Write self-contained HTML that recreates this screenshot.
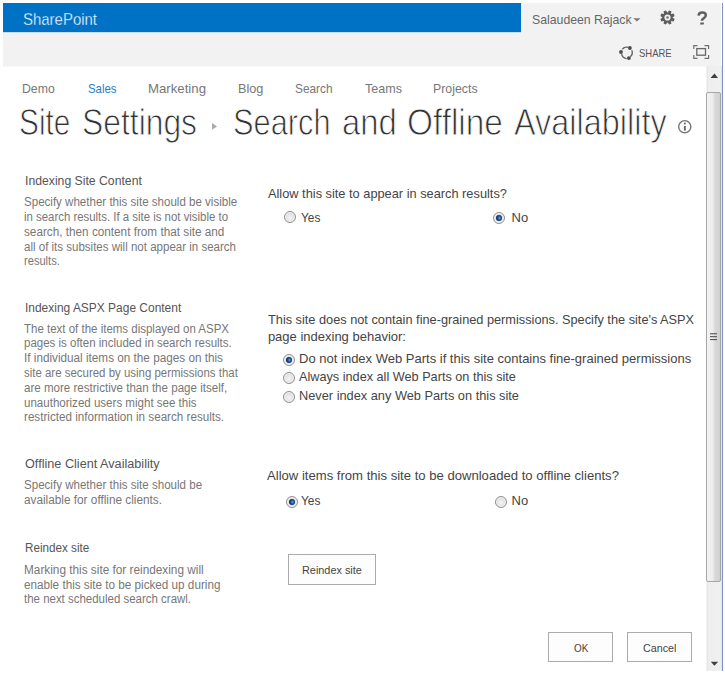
<!DOCTYPE html>
<html><head><meta charset="utf-8"><style>
html,body{margin:0;padding:0;}
body{width:725px;height:675px;overflow:hidden;background:#fff;position:relative;font-family:"Liberation Sans",sans-serif;}
.t{position:absolute;white-space:pre;line-height:1;transform-origin:0 0;font-family:"Liberation Sans",sans-serif;}
.abs{position:absolute;}
.radio{position:absolute;width:10px;height:10px;border-radius:50%;border:1px solid #8f8f8f;background:radial-gradient(circle at 50% 55%,#f4f4f4 0,#dcdcdc 70%,#e8e8e8 100%);box-shadow:inset 0 0 0 1px #f6f6f6;}
.radio.on::after{content:"";position:absolute;left:2px;top:2px;width:6px;height:6px;border-radius:50%;background:radial-gradient(circle 3.6px at 3.4px 3px,#6cc0f2 0,#2a78c0 1px,#163c78 2.2px,#0c1f4c 3.6px);}
.btn{position:absolute;box-sizing:border-box;border:1px solid #ababab;background:#fdfdfd;}
</style></head><body>
<div class="abs" style="left:3px;top:3px;width:518px;height:29px;background:#0072c6"></div>
<div class="abs" style="left:521px;top:3px;width:200px;height:29px;background:#f2f2f2"></div>
<div class="abs" style="left:3px;top:32px;width:718px;height:34px;background:#f2f2f2"></div>
<div class="abs" style="left:3px;top:32px;width:518px;height:1px;background:#c9dcec"></div>
<div class="abs" style="left:722px;top:3px;width:1px;height:668px;background:#8094bb"></div>
<!-- scrollbar -->
<div class="abs" style="left:706px;top:66px;width:15px;height:605px;background:linear-gradient(to right,#f2f2f2 0,#f2f2f2 1px,#e6e6e6 1px,#e6e6e6 2px,#eeeeee 2px,#f0f0f0 100%)"></div>
<div class="abs" style="left:3px;top:66px;width:703px;height:1px;background:#f9f9f9"></div>
<div class="abs" style="left:721px;top:66px;width:1px;height:605px;background:#e6e6e6"></div>
<svg class="abs" style="left:706px;top:66px" width="15" height="605" viewBox="0 0 15 605">
 <polygon points="4.5,12 8.5,7.5 12,12" fill="#404040"/>
 <polygon points="4.8,595.8 12.2,595.8 8.4,599.8" fill="#404040"/>
</svg>
<div class="abs" style="left:706px;top:92px;width:15px;height:490px;box-sizing:border-box;border:1px solid #a6a6a6;border-radius:2px;background:linear-gradient(to right,#f3f3f3 0,#ececec 45%,#d9d9d9 60%,#d0d0d0 100%)"></div>
<svg class="abs" style="left:706px;top:330px" width="15" height="12" viewBox="0 0 15 12">
 <rect x="4" y="3.2" width="7" height="1.1" fill="#555"/>
 <rect x="4" y="6.1" width="7" height="1.1" fill="#555"/>
 <rect x="4" y="9.0" width="7" height="1.1" fill="#555"/>
</svg>
<!-- suite icons -->
<svg class="abs" style="left:630px;top:15px" width="14" height="10" viewBox="0 0 14 10"><polygon points="3.3,3.2 10.5,3.2 6.9,6.5" fill="#777"/></svg>
<svg class="abs" style="left:660px;top:10.3px" width="15" height="15" viewBox="0 0 15 15"><path d="M7.50,2.50 L7.61,2.50 L9.10,0.38 L11.40,1.33 L10.95,3.89 L11.04,3.96 L11.11,4.05 L13.67,3.60 L14.62,5.90 L12.50,7.39 L12.50,7.50 L12.50,7.61 L14.62,9.10 L13.67,11.40 L11.11,10.95 L11.04,11.04 L10.95,11.11 L11.40,13.67 L9.10,14.62 L7.61,12.50 L7.50,12.50 L7.39,12.50 L5.90,14.62 L3.60,13.67 L4.05,11.11 L3.96,11.04 L3.89,10.95 L1.33,11.40 L0.38,9.10 L2.50,7.61 L2.50,7.50 L2.50,7.39 L0.38,5.90 L1.33,3.60 L3.89,4.05 L3.96,3.96 L4.05,3.89 L3.60,1.33 L5.90,0.38 L7.39,2.50Z" fill="#5f5f5f"/><circle cx="7.5" cy="7.5" r="3.1" fill="#f2f2f2"/><circle cx="7.5" cy="7.5" r="1.3" fill="#777"/></svg>
<svg class="abs" style="left:692px;top:8px" width="20" height="20" viewBox="0 0 20 20"><path d="M6.6,7.6 C6.8,5.4 8.3,4.6 10.2,4.6 C12.3,4.6 13.8,5.6 13.8,7.3 C13.8,9 12.6,9.7 11.4,10.6 C10.4,11.3 9.9,11.9 9.9,12.8" fill="none" stroke="#5f5f5f" stroke-width="2.5"/><path d="M8.4,14.5 H12 L11.7,16.6 H8.1 Z" fill="#5f5f5f"/></svg>
<svg class="abs" style="left:614px;top:42px" width="24" height="22" viewBox="0 0 24 22">
 <g fill="none" stroke="#666" stroke-width="1.4">
  <path d="M8.3,7.3 A5.6,5.6 0 0 1 14.2,5.4"/>
  <path d="M17.8,8.2 A5.6,5.6 0 0 1 16.3,14.6"/>
  <path d="M12.7,16.6 A5.6,5.6 0 0 1 7.6,12.2"/>
 </g>
 <circle cx="15.9" cy="6" r="1.9" fill="#4a4a4a"/>
 <circle cx="7" cy="10" r="1.9" fill="#4a4a4a"/>
 <circle cx="14.9" cy="16.1" r="1.9" fill="#4a4a4a"/>
</svg>
<svg class="abs" style="left:688px;top:40px" width="26" height="24" viewBox="0 0 26 24">
 <g fill="none" stroke="#707070" stroke-width="1.2">
  <path d="M5.8,9 V5.6 H9.5"/>
  <path d="M16.5,5.6 H20.6 V9"/>
  <path d="M5.8,15 V18.4 H9.5"/>
  <path d="M16.5,18.4 H20.6 V15"/>
 </g>
 <rect x="8.8" y="8.6" width="8.7" height="6.6" fill="none" stroke="#666" stroke-width="1.3"/>
</svg>
<!-- title arrow and info -->
<svg class="abs" style="left:205px;top:115px" width="20" height="20" viewBox="0 0 20 20"><polygon points="7,8 12,11.4 7,14.8" fill="#ababab"/></svg>
<svg class="abs" style="left:672px;top:115px" width="25" height="25" viewBox="0 0 25 25">
 <circle cx="12.75" cy="11.7" r="6.1" fill="none" stroke="#777" stroke-width="1.4"/>
 <rect x="11.9" y="10.9" width="1.9" height="4.7" fill="#666"/>
 <circle cx="12.8" cy="8.4" r="1" fill="#666"/>
</svg>
<!-- radios -->
<div class="radio" style="left:284px;top:211px"></div>
<div class="radio on" style="left:493px;top:212px"></div>
<div class="radio on" style="left:283px;top:353.5px"></div>
<div class="radio" style="left:283px;top:372px"></div>
<div class="radio" style="left:283px;top:391px"></div>
<div class="radio on" style="left:286px;top:496px"></div>
<div class="radio" style="left:495px;top:496px"></div>
<!-- buttons -->
<div class="btn" style="left:288px;top:554px;width:88px;height:31px"></div>
<div class="btn" style="left:548px;top:632px;width:65px;height:30px"></div>
<div class="btn" style="left:627px;top:632px;width:65px;height:30px"></div>
<span class="t" style="left:23.30px;top:11.70px;font-size:16.8px;color:#fff;transform:scaleX(0.8916);-webkit-text-stroke:0.35px #0072c6;">SharePoint</span>
<span class="t" style="left:531.50px;top:13.80px;font-size:12.2px;color:#666;transform:scaleX(1.0071);">Salaudeen Rajack</span>
<span class="t" style="left:638.80px;top:48.40px;font-size:11px;color:#555;transform:scaleX(0.8605);">SHARE</span>
<span class="t" style="left:22.00px;top:81.60px;font-size:13px;color:#777;transform:scaleX(0.9429);">Demo</span>
<span class="t" style="left:87.80px;top:81.60px;font-size:13px;color:#1a7fd0;transform:scaleX(0.8758);">Sales</span>
<span class="t" style="left:148.30px;top:81.60px;font-size:13px;color:#777;transform:scaleX(1.0158);">Marketing</span>
<span class="t" style="left:238.00px;top:81.60px;font-size:13px;color:#777;transform:scaleX(0.9731);">Blog</span>
<span class="t" style="left:295.00px;top:81.60px;font-size:13px;color:#777;transform:scaleX(0.9098);">Search</span>
<span class="t" style="left:364.80px;top:81.60px;font-size:13px;color:#777;transform:scaleX(0.9658);">Teams</span>
<span class="t" style="left:433.00px;top:81.60px;font-size:13px;color:#777;transform:scaleX(0.9489);">Projects</span>
<span class="t" style="left:18.78px;top:105.00px;font-size:36.5px;color:#333;transform:scaleX(0.8164);-webkit-text-stroke:0.9px #fff;">Site</span>
<span class="t" style="left:81.73px;top:105.00px;font-size:36.5px;color:#333;transform:scaleX(0.8723);-webkit-text-stroke:0.9px #fff;">Settings</span>
<span class="t" style="left:232.76px;top:105.00px;font-size:36.5px;color:#333;transform:scaleX(0.8442);-webkit-text-stroke:0.9px #fff;">Search</span>
<span class="t" style="left:341.70px;top:105.00px;font-size:36.5px;color:#333;transform:scaleX(0.9000);-webkit-text-stroke:0.9px #fff;">and</span>
<span class="t" style="left:407.49px;top:105.00px;font-size:36.5px;color:#333;transform:scaleX(0.9146);-webkit-text-stroke:0.9px #fff;">Offline</span>
<span class="t" style="left:513.60px;top:105.00px;font-size:36.5px;color:#333;transform:scaleX(0.8884);-webkit-text-stroke:0.9px #fff;">Availability</span>
<span class="t" style="left:25.30px;top:174.80px;font-size:12.5px;color:#555;transform:scaleX(0.9775);">Indexing Site Content</span>
<span class="t" style="left:25.00px;top:301.60px;font-size:12.5px;color:#555;transform:scaleX(0.9567);">Indexing ASPX Page Content</span>
<span class="t" style="left:24.90px;top:457.60px;font-size:12.5px;color:#555;transform:scaleX(1.0128);">Offline Client Availability</span>
<span class="t" style="left:25.30px;top:541.90px;font-size:12.5px;color:#555;transform:scaleX(0.9348);">Reindex site</span>
<span class="t" style="left:267.50px;top:186.70px;font-size:13px;color:#444;transform:scaleX(0.9840);">Allow this site to appear in search results?</span>
<span class="t" style="left:301.40px;top:210.80px;font-size:13px;color:#444;transform:scaleX(0.9143);">Yes</span>
<span class="t" style="left:511.50px;top:211.00px;font-size:13px;color:#444;">No</span>
<span class="t" style="left:267.90px;top:313.00px;font-size:13px;color:#444;transform:scaleX(0.9805);">This site does not contain fine-grained permissions. Specify the site's ASPX</span>
<span class="t" style="left:267.90px;top:329.50px;font-size:13px;color:#444;">page indexing behavior:</span>
<span class="t" style="left:299.10px;top:351.80px;font-size:13px;color:#444;">Do not index Web Parts if this site contains fine-grained permissions</span>
<span class="t" style="left:299.10px;top:370.00px;font-size:13px;color:#444;transform:scaleX(0.9757);">Always index all Web Parts on this site</span>
<span class="t" style="left:299.10px;top:388.70px;font-size:13px;color:#444;transform:scaleX(0.9830);">Never index any Web Parts on this site</span>
<span class="t" style="left:267.30px;top:469.40px;font-size:13px;color:#444;transform:scaleX(1.0069);">Allow items from this site to be downloaded to offline clients?</span>
<span class="t" style="left:301.40px;top:493.60px;font-size:13px;color:#444;transform:scaleX(0.9143);">Yes</span>
<span class="t" style="left:511.60px;top:493.60px;font-size:13px;color:#444;">No</span>
<span class="t" style="left:302.00px;top:564.70px;font-size:11px;color:#444;transform:scaleX(0.9885);">Reindex site</span>
<span class="t" style="left:574.20px;top:642.50px;font-size:11px;color:#444;transform:scaleX(0.9000);">OK</span>
<span class="t" style="left:642.60px;top:642.50px;font-size:11px;color:#444;transform:scaleX(0.9765);">Cancel</span>
<span class="t" style="left:24.10px;top:196.10px;font-size:12px;color:#777;transform:scaleX(0.9626);">Specify whether this site should be visible</span>
<span class="t" style="left:24.10px;top:210.90px;font-size:12px;color:#777;transform:scaleX(0.9498);">in search results. If a site is not visible to</span>
<span class="t" style="left:24.10px;top:225.70px;font-size:12px;color:#777;transform:scaleX(0.9785);">search, then content from that site and</span>
<span class="t" style="left:24.10px;top:240.50px;font-size:12px;color:#777;transform:scaleX(0.9602);">all of its subsites will not appear in search</span>
<span class="t" style="left:24.10px;top:255.30px;font-size:12px;color:#777;transform:scaleX(0.9263);">results.</span>
<span class="t" style="left:24.10px;top:322.50px;font-size:12px;color:#777;transform:scaleX(0.9575);">The text of the items displayed on ASPX</span>
<span class="t" style="left:24.10px;top:337.30px;font-size:12px;color:#777;transform:scaleX(0.9583);">pages is often included in search results.</span>
<span class="t" style="left:24.10px;top:352.10px;font-size:12px;color:#777;transform:scaleX(0.9779);">If individual items on the pages on this</span>
<span class="t" style="left:24.10px;top:366.90px;font-size:12px;color:#777;transform:scaleX(0.9542);">site are secured by using permissions that</span>
<span class="t" style="left:24.10px;top:381.70px;font-size:12px;color:#777;transform:scaleX(0.9638);">are more restrictive than the page itself,</span>
<span class="t" style="left:24.10px;top:396.50px;font-size:12px;color:#777;transform:scaleX(0.9617);">unauthorized users might see this</span>
<span class="t" style="left:24.10px;top:411.30px;font-size:12px;color:#777;transform:scaleX(0.9709);">restricted information in search results.</span>
<span class="t" style="left:24.10px;top:478.90px;font-size:12px;color:#777;transform:scaleX(0.9638);">Specify whether this site should be</span>
<span class="t" style="left:24.10px;top:493.70px;font-size:12px;color:#777;transform:scaleX(0.9821);">available for offline clients.</span>
<span class="t" style="left:24.10px;top:563.70px;font-size:12px;color:#777;transform:scaleX(0.9831);">Marking this site for reindexing will</span>
<span class="t" style="left:24.10px;top:578.50px;font-size:12px;color:#777;transform:scaleX(0.9748);">enable this site to be picked up during</span>
<span class="t" style="left:24.10px;top:593.30px;font-size:12px;color:#777;transform:scaleX(0.9557);">the next scheduled search crawl.</span>
</body></html>
